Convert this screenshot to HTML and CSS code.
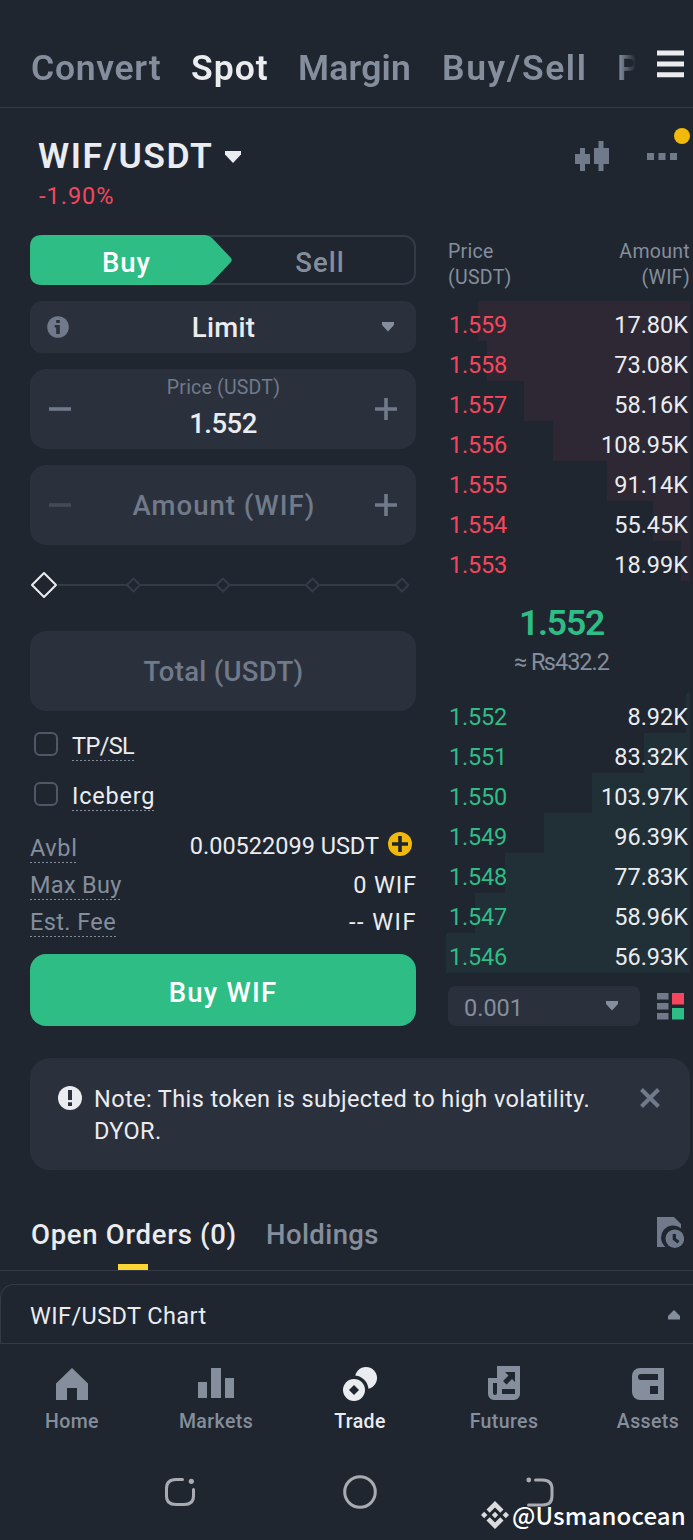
FILE: index.html
```html
<!DOCTYPE html>
<html lang="en">
<head>
  <meta charset="utf-8" />
  <title>WIF/USDT Spot</title>
  <link rel="stylesheet" href="styles.css">
</head>
<body>
  <nav class="top-nav">
    <div class="top-tabs">
      <a class="t-convert">Convert</a>
      <a class="t-spot active">Spot</a>
      <a class="t-margin">Margin</a>
      <a class="t-buysell">Buy/Sell</a>
      <a>P</a>
    </div>
    <svg class="menu-icon" width="28" height="28" viewBox="0 0 28 28"><path d="M0 .5h27v5H0zM0 11.500h27v5H0zM0 22.300h27v5H0z" fill="#eaecef"/></svg>
  </nav>

  <header class="pair">
    <div class="pair-info">
      <div class="pair-name"><span>WIF/USDT</span>
        <svg width="16" height="12" viewBox="0 0 16 12"><path d="M0 0h16v3.500L8 12 0 3.500z" fill="#eaecef"/></svg>
      </div>
      <div class="change">-1.90%</div>
    </div>
    <div class="pair-actions">
      <svg width="34" height="30" viewBox="0 0 34 30"><path d="M5 7h5v6h5v10h-5v7H5v-7H0V13h5zM23.500 0h5v7H34v16h-5.500v7h-5v-7H19V7h4.500z" fill="#707a8a"/></svg>
      <div class="more">
        <svg width="30" height="8" viewBox="0 0 30 8"><path d="M0 0h7v7H0zM11.500 0h7v7h-7zM23 0h7v7h-7z" fill="#707a8a"/></svg>
        <i class="badge"></i>
      </div>
    </div>
  </header>

  <main class="trade">
    <section class="form">
      <div class="side">
        <div class="side-buy">Buy</div>
        <div class="side-sell">Sell</div>
      </div>

      <div class="field select">
        <svg width="22" height="22" viewBox="0 0 22 22"><circle cx="11" cy="11" r="10.800" fill="#707a8a"/><path d="M9.200 4h3.600v3H9.200zM7.700 9h5.100v9H9.200v-6.500H7.700z" fill="#2b313c"/></svg>
        <span class="limit">Limit</span>
        <svg class="caret" width="12" height="10" viewBox="0 0 12 10"><path d="M0 0h12v3L6 9.500 0 3z" fill="#848e9c"/></svg>
      </div>

      <div class="field">
        <svg width="22" height="22" viewBox="0 0 22 22"><path d="M0 9.200h22v3.600H0z" fill="#707a8a"/></svg>
        <div class="price-input">
          <span class="price-label">Price (USDT)</span>
          <span class="price-value">1.552</span>
        </div>
        <svg width="22" height="22" viewBox="0 0 22 22"><path d="M0 9.200h22v3.600H0zM9.200 0h3.600v22H9.200z" fill="#707a8a"/></svg>
      </div>

      <div class="field">
        <svg width="22" height="22" viewBox="0 0 22 22"><path d="M0 9.200h22v3.600H0z" fill="#434b58"/></svg>
        <span class="placeholder p-amount">Amount (WIF)</span>
        <svg width="22" height="22" viewBox="0 0 22 22"><path d="M0 9.200h22v3.600H0zM9.200 0h3.600v22H9.200z" fill="#707a8a"/></svg>
      </div>

      <svg class="slider" width="386" height="86" viewBox="0 0 386 86">
        <path d="M28 40H366" stroke="#333b47" stroke-width="2"/>
        <g fill="#202630" stroke="#333b47" stroke-width="2" stroke-linejoin="round">
          <path d="M97 40l6.500-6.500L110 40l-6.500 6.500z"/>
          <path d="M186.500 40l6.500-6.500 6.500 6.500-6.500 6.500z"/>
          <path d="M276 40l6.500-6.500L289 40l-6.500 6.500z"/>
          <path d="M365.500 40l6.500-6.500 6.500 6.500-6.500 6.500z"/>
        </g>
        <path d="M2 40l12-12 12 12-12 12z" fill="#202630" stroke="#eaecef" stroke-width="2" stroke-linejoin="round"/>
      </svg>

      <div class="field total"><span class="placeholder p-total">Total (USDT)</span></div>

      <div class="checks">
        <label class="check"><i class="box"></i><span class="hint c-tpsl">TP/SL</span></label>
        <label class="check"><i class="box"></i><span class="hint c-iceberg">Iceberg</span></label>
      </div>

      <div class="info">
        <div class="info-row">
          <span class="key k-avbl">Avbl</span>
          <span class="val v-avbl">0.00522099 USDT</span>
          <svg class="add" width="24" height="24" viewBox="0 0 24 24"><circle cx="12" cy="12" r="12" fill="#f0b90b"/><path d="M10.200 4h3.600v6.200H20v3.600h-6.200V20h-3.600v-6.200H4v-3.600h6.200z" fill="#202630"/></svg>
        </div>
        <div class="info-row"><span class="key k-max">Max Buy</span><span class="val v-max">0 WIF</span></div>
        <div class="info-row"><span class="key k-fee">Est. Fee</span><span class="val v-fee">-- WIF</span></div>
      </div>

      <button class="submit">Buy WIF</button>
    </section>

    <section class="book">
      <div class="book-head">
        <div>Price<br>(USDT)</div>
        <div class="right">Amount<br>(WIF)</div>
      </div>
      <div class="asks">
        <div class="row"><i style="width:212px"></i><b>1.559</b><span>17.80K</span></div>
        <div class="row"><i style="width:203px"></i><b>1.558</b><span>73.08K</span></div>
        <div class="row"><i style="width:166px"></i><b>1.557</b><span>58.16K</span></div>
        <div class="row"><i style="width:137px"></i><b>1.556</b><span>108.95K</span></div>
        <div class="row"><i style="width:83px"></i><b>1.555</b><span>91.14K</span></div>
        <div class="row"><i style="width:37px"></i><b>1.554</b><span>55.45K</span></div>
        <div class="row"><i style="width:9px"></i><b>1.553</b><span>18.99K</span></div>
      </div>
      <div class="last">
        <div class="last-price">1.552</div>
        <div class="last-fiat">≈ ₨432.2</div>
      </div>
      <div class="bids">
        <div class="row"><i style="width:4px"></i><b>1.552</b><span>8.92K</span></div>
        <div class="row"><i style="width:46px"></i><b>1.551</b><span>83.32K</span></div>
        <div class="row"><i style="width:98px"></i><b>1.550</b><span>103.97K</span></div>
        <div class="row"><i style="width:146px"></i><b>1.549</b><span>96.39K</span></div>
        <div class="row"><i style="width:185px"></i><b>1.548</b><span>77.83K</span></div>
        <div class="row"><i style="width:215px"></i><b>1.547</b><span>58.96K</span></div>
        <div class="row"><i style="width:244px"></i><b>1.546</b><span>56.93K</span></div>
      </div>
      <div class="book-foot">
        <div class="step"><span>0.001</span>
          <svg width="12" height="10" viewBox="0 0 12 10"><path d="M0 0h12v3L6 9.500 0 3z" fill="#848e9c"/></svg>
        </div>
        <svg width="27" height="27" viewBox="0 0 27 27"><path d="M0 0h11.500v6.500H0zM0 10h11.500v6.500H0zM0 20h11.500v6.500H0z" fill="#707a8a"/><path d="M15 0h12v11.500H15z" fill="#f6465d"/><path d="M15 15h12v11.500H15z" fill="#2ebd85"/></svg>
      </div>
    </section>
  </main>

  <aside class="notice">
    <svg width="24" height="24" viewBox="0 0 24 24"><circle cx="12" cy="12" r="12" fill="#eaecef"/><path d="M10 4h4v10h-4zM10 16.300h4V20h-4z" fill="#2b313c"/></svg>
    <p>Note: This token is subjected to high volatility.<br>DYOR.</p>
    <svg class="close" width="20" height="20" viewBox="0 0 20 20"><path d="M1.500 1.500l17 17M18.500 1.500l-17 17" stroke="#707a8a" stroke-width="4"/></svg>
  </aside>

  <div class="order-tabs">
    <a class="active">Open Orders (0)</a>
    <a class="holdings">Holdings</a>
    <svg width="27" height="32" viewBox="0 0 27 32"><path d="M0 0h17l7 7v4.200A11.500 11.500 0 0 0 8.500 30H0z" fill="#707a8a"/><circle cx="17.800" cy="21.700" r="9.300" fill="#707a8a"/><path d="M17.300 17v5l4.200 3.200" fill="none" stroke="#202630" stroke-width="3.200"/></svg>
  </div>

  <div class="chart-bar">
    <span>WIF/USDT Chart</span>
    <svg width="12" height="10" viewBox="0 0 12 10"><path d="M0 9.500h12V6L6 0 0 6z" fill="#848e9c"/></svg>
  </div>

  <nav class="bottom-nav">
    <a>
      <svg width="36" height="36" viewBox="0 0 36 36"><path d="M18 2l16 15.500V34H23V22H13v12H2V17.500z" fill="#848e9c"/></svg>
      <span>Home</span>
    </a>
    <a>
      <svg width="36" height="36" viewBox="0 0 36 36"><path d="M0 16h9v16H0zM13 2h10v30H13zM27 12h9v20h-9z" fill="#848e9c"/></svg>
      <span>Markets</span>
    </a>
    <a class="active">
      <svg width="36" height="36" viewBox="0 0 36 36"><circle cx="24" cy="12" r="11" fill="#eaecef"/><circle cx="12" cy="24" r="14.500" fill="#202630"/><circle cx="12" cy="24" r="11" fill="#eaecef"/><path d="M12 19l5 5-5 5-5-5z" fill="#202630"/></svg>
      <span>Trade</span>
    </a>
    <a>
      <svg width="36" height="36" viewBox="0 0 36 36"><path d="M11 0h23v28a6 6 0 0 1-6 6H8a6 6 0 0 1-6-6V12h9z" fill="#848e9c"/><path d="M7 17h4v10q0 2-2 2t-2-2zM16 23h13v5H16zM19 6h10v10l-3-3-5.500 5.500-3.500-3.500L22.500 9.500z" fill="#202630"/></svg>
      <span>Futures</span>
    </a>
    <a>
      <svg width="36" height="36" viewBox="0 0 36 36"><path d="M10 2h24v32H10a8 8 0 0 1-8-8V10a8 8 0 0 1 8-8z" fill="#848e9c"/><path d="M11 8h17v6H11a3 3 0 0 1 0-6zM20 20h8v8h-8z" fill="#202630"/></svg>
      <span>Assets</span>
    </a>
  </nav>

  <div class="system-nav">
    <svg width="32" height="32" viewBox="0 0 32 32"><path d="M18.500 3.500H12Q2.500 3.500 2.500 12.500v7.500q0 8.500 9.500 8.500h8q9.500 0 9.500-8.500v-6.500" fill="none" stroke="#a8acb1" stroke-width="3" stroke-linecap="round"/><circle cx="27.300" cy="5.300" r="2.600" fill="#a8acb1"/></svg>
    <svg width="34" height="34" viewBox="0 0 34 34"><circle cx="17" cy="17" r="15.300" fill="none" stroke="#a8acb1" stroke-width="3"/></svg>
    <svg width="30" height="32" viewBox="0 0 30 32"><path d="M11.500 4h7Q28 4 28 13v7q0 9-9.500 9H4.500" fill="none" stroke="#a8acb1" stroke-width="3" stroke-linecap="round"/><circle cx="4.800" cy="4" r="2.400" fill="#a8acb1"/></svg>
    <div class="watermark">
      <svg width="28" height="28" viewBox="0 0 28 28"><path d="M14 0l8.500 8.500-3.200 3.200L14 6.400l-5.300 5.300-3.200-3.200zM14 28l-8.500-8.500 3.200-3.200 5.300 5.300 5.300-5.300 3.200 3.200zM14 10.800l3.200 3.200-3.200 3.200-3.200-3.200zM3.200 10.800L6.400 14l-3.200 3.200L0 14zM24.800 10.800L28 14l-3.200 3.200-3.200-3.200z" fill="#dcdcdc"/></svg>
      <span>@Usmanocean</span>
    </div>
  </div>
</body>
</html>
```
FILE: styles.css
```css
* {
  box-sizing: border-box;
}
body {
  margin: 0;
  width: 693px;
  height: 1540px;
  overflow: hidden;
  background: #202630;
  color: #eaecef;
  font-family: Roboto, "Noto Sans", sans-serif;
  font-size: 23.5px;
}
svg {
  display: block;
  flex: none;
}
i {
  display: block;
}

/* top tabs */
.top-nav {
  display: flex;
  height: 108px;
  padding: 49px 0 0 31px;
  border-bottom: 1px solid #333b47;
}
.top-tabs {
  display: flex;
  width: 606px;
  height: 50px;
  margin-top: -6px;
  white-space: nowrap;
  font-size: 35.5px;
  font-weight: 600;
  line-height: 51px;
  color: #848e9c;
  -webkit-mask-image: linear-gradient(90deg, #000 588px, transparent 605px);
  mask-image: linear-gradient(90deg, #000 588px, transparent 605px);
}
.top-tabs a {
  flex: none;
}
.top-tabs .active {
  color: #eaecef;
}
.t-convert {
  width: 160px;
  letter-spacing: 0.7px;
}
.t-spot {
  width: 107px;
  letter-spacing: 1px;
}
.t-margin {
  width: 144px;
  letter-spacing: 0.2px;
}
.t-buysell {
  width: 175px;
  letter-spacing: 1.6px;
}
.menu-icon {
  margin: 1px 0 0 20px;
}

/* pair */
.pair {
  display: flex;
  justify-content: space-between;
  height: 127px;
  padding: 26px 16px 0 38px;
}
.pair-name {
  display: flex;
  align-items: center;
  gap: 12px;
  font-size: 35.5px;
  font-weight: 600;
  line-height: 45px;
  letter-spacing: 1.5px;
}
.change {
  padding-left: 1px;
  line-height: 34px;
  letter-spacing: 1px;
  color: #f6465d;
}
.pair-actions {
  display: flex;
  gap: 38px;
  padding-top: 7px;
}
.more {
  position: relative;
  padding-top: 12px;
}
.badge {
  position: absolute;
  top: -13px;
  right: -13px;
  width: 16px;
  height: 16px;
  border-radius: 50%;
  background: #f0b90b;
}

/* trade */
.trade {
  display: flex;
  gap: 32px;
  padding-left: 30px;
}
.form {
  width: 386px;
}
.side {
  display: flex;
  height: 50px;
  margin-bottom: 16px;
  border-radius: 12px;
  box-shadow: inset 0 0 0 2px #333b47;
  font-size: 27.5px;
  font-weight: 500;
  line-height: 55px;
  letter-spacing: 1px;
  text-align: center;
}
.side-buy {
  width: 202px;
  padding-right: 9px;
  background: #2ebd85;
  color: #fff;
  clip-path: path("M12 0H174Q179 0 182.500 3.500L200.500 22.500Q203 25 200.500 27.500L182.500 46.500Q179 50 174 50H12Q0 50 0 38V12Q0 0 12 0Z");
}
.side-sell {
  flex: 1;
  padding-right: 8px;
  color: #848e9c;
}
.field {
  display: flex;
  align-items: center;
  justify-content: space-between;
  height: 80px;
  padding: 0 19px;
  margin-bottom: 16px;
  border-radius: 16px;
  background: #2b313c;
  font-size: 27.5px;
}
.select {
  height: 52px;
  padding: 0 22px 0 17px;
  border-radius: 12px;
  font-weight: 500;
}
.limit {
  margin-right: 4px;
  letter-spacing: 0.3px;
}
.price-input {
  display: flex;
  flex-direction: column;
  align-items: center;
}
.price-label {
  margin: -4px 0 0 1px;
  font-size: 19.5px;
  line-height: 34px;
  letter-spacing: 0.2px;
  color: #707a8a;
}
.price-value {
  line-height: 37px;
  padding-bottom: 2px;
  font-weight: 500;
  letter-spacing: -0.5px;
}
.placeholder {
  font-weight: 500;
  color: #707a8a;
}
.p-amount {
  margin-left: 2px;
  letter-spacing: 1px;
}
.p-total {
  margin-left: 1px;
  letter-spacing: 0.3px;
}
.slider {
  margin-top: -16px;
}
.total {
  justify-content: center;
  margin: 0;
}
.checks {
  padding: 10px 0 0 4px;
}
.check {
  display: flex;
  align-items: center;
  gap: 14px;
  height: 50px;
}
.box {
  width: 24px;
  height: 24px;
  margin-bottom: 4px;
  border: 2px solid #4f5867;
  border-radius: 6px;
}
.hint,
.key {
  line-height: 30px;
  background: repeating-linear-gradient(90deg, #848e9c 0 2px, transparent 2px 4px) left bottom / 100% 1px no-repeat;
}
.c-tpsl {
  letter-spacing: -0.6px;
}
.c-iceberg {
  letter-spacing: 0.8px;
}
.info {
  padding-top: 8px;
}
.info-row {
  display: flex;
  align-items: center;
  height: 37px;
}
.key {
  color: #848e9c;
}
.k-avbl {
  letter-spacing: 0.6px;
}
.k-max {
  letter-spacing: 0.3px;
}
.k-fee {
  letter-spacing: 0.4px;
}
.val {
  margin-left: auto;
}
.v-avbl {
  margin-bottom: 3px;
}
.v-max {
  margin-right: -1px;
  letter-spacing: 0.9px;
}
.v-fee {
  margin-right: -1px;
  letter-spacing: 1.5px;
}
.add {
  margin: 0 4px 7px 9px;
}
.submit {
  display: block;
  width: 386px;
  height: 72px;
  margin-top: 14px;
  padding: 4px 0 0;
  border: none;
  border-radius: 16px;
  background: #2ebd85;
  color: #fff;
  font: 500 27.5px Roboto, sans-serif;
  letter-spacing: 1.2px;
}

/* order book */
.book {
  width: 242px;
}
.book-head {
  display: flex;
  justify-content: space-between;
  height: 66px;
  padding-top: 4px;
  font-size: 19.5px;
  line-height: 26px;
  letter-spacing: 0.3px;
  color: #848e9c;
}
.right {
  text-align: right;
}
.row {
  position: relative;
  display: flex;
  justify-content: space-between;
  height: 40px;
  padding: 7px 2px 0 1px;
  line-height: 34px;
}
.row i {
  position: absolute;
  top: 0;
  right: 0;
  height: 40px;
}
.row b,
.row span {
  position: relative;
  font-weight: 400;
}
.row b {
  letter-spacing: -0.2px;
}
.asks i { background: #2d2833; }
.asks b { color: #f6465d; }
.bids i { background: #212f36; }
.bids b { color: #2ebd85; }
.last {
  height: 112px;
  padding-top: 19px;
  text-align: center;
}
.last-price {
  margin-right: 15px;
  font-size: 35.5px;
  font-weight: 600;
  line-height: 46px;
  letter-spacing: -1.2px;
  color: #2ebd85;
}
.last-fiat {
  margin: -1px 15px 0 0;
  line-height: 34px;
  letter-spacing: -1px;
  color: #848e9c;
}
.book-foot {
  display: flex;
  align-items: center;
  justify-content: space-between;
  padding: 13px 6px 0 0;
}
.step {
  display: flex;
  align-items: center;
  justify-content: space-between;
  width: 192px;
  height: 40px;
  padding: 0 22px 0 16px;
  border-radius: 8px;
  background: #2b313c;
  color: #848e9c;
}
.step span {
  padding-top: 3px;
}

/* notice */
.notice {
  display: flex;
  width: 660px;
  height: 112px;
  margin: 32px 0 0 30px;
  padding: 24px 30px 0 28px;
  border-radius: 20px;
  background: #2b313c;
}
.notice svg {
  margin-top: 4px;
}
.notice p {
  margin: 1px 0 0 12px;
  line-height: 32px;
  letter-spacing: 0.4px;
  white-space: nowrap;
}
.notice .close {
  margin: 6px 0 0 auto;
}

/* orders */
.order-tabs {
  display: flex;
  height: 101px;
  padding: 47px 9px 0 31px;
  border-bottom: 1px solid #333b47;
  font-size: 27.5px;
  font-weight: 500;
  line-height: 36px;
  color: #848e9c;
}
.order-tabs .active {
  width: 206px;
  margin-right: 29px;
  white-space: nowrap;
  letter-spacing: 0.7px;
  color: #eaecef;
  background: linear-gradient(#fcd535, #fcd535) 87px bottom / 30px 6px no-repeat;
}
.holdings {
  letter-spacing: 0.4px;
}
.order-tabs svg {
  margin-left: auto;
}
.chart-bar {
  display: flex;
  align-items: center;
  justify-content: space-between;
  height: 60px;
  margin-top: 13px;
  padding: 2px 13px 0 29px;
  border: 1px solid #333b47;
  border-right: none;
  border-radius: 14px 0 0 0;
  letter-spacing: 0.4px;
}
.chart-bar span {
  padding-top: 2px;
}
.chart-bar svg {
  margin-bottom: 1px;
}

/* bottom bars */
.bottom-nav {
  display: flex;
  width: 720px;
  padding-top: 22px;
  font-size: 19.5px;
  font-weight: 500;
  line-height: 30px;
  letter-spacing: 0.4px;
  color: #848e9c;
}
.bottom-nav a {
  display: flex;
  flex-direction: column;
  align-items: center;
  gap: 5px;
  width: 144px;
}
.bottom-nav .active {
  color: #eaecef;
}
.system-nav {
  position: relative;
  display: flex;
  align-items: center;
  height: 68px;
  margin-top: 21px;
  padding-left: 164px;
  gap: 147px;
}
.watermark {
  position: absolute;
  left: 481px;
  top: 41px;
  display: flex;
  align-items: center;
  gap: 3px;
  font: 500 24px/32px "Noto Sans CJK SC", sans-serif;
  letter-spacing: 0.15px;
  color: #fff;
}
```
